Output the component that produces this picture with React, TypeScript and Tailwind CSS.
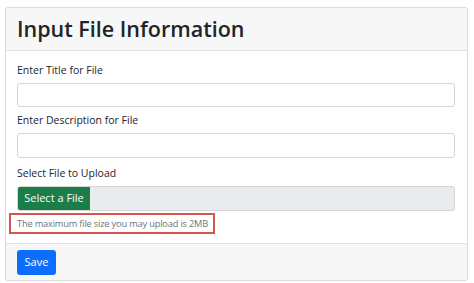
export default function App() {
  return (
    <div className="w-[474px] h-[283px] bg-white pt-[7px] pl-[5px]" style={{ fontFamily: '"Segoe UI", "Open Sans", sans-serif' }}>
      <div className="w-[463px] border border-[#dcdcdc] rounded-[3px] overflow-hidden">
        <div className="h-[43px] bg-[#f7f7f7] border-b border-[#e2e2e2] flex items-center px-[11px]">
          <h1 className="text-[21.5px] leading-none text-[#212529] font-semibold">Input File Information</h1>
        </div>
        <div className="px-[11px] pt-[12px] pb-[9px] flex flex-col">
          <label className="text-[10.5px] text-[#212529] leading-[14px]">Enter Title for File</label>
          <input className="mt-[6px] h-[24px] w-[438px] border border-[#d6d6d6] rounded-[3px]" />
          <label className="mt-[6px] text-[10.5px] text-[#212529] leading-[14px]">Enter Description for File</label>
          <input className="mt-[6px] h-[25px] w-[438px] border border-[#d6d6d6] rounded-[3px]" />
          <label className="mt-[8px] text-[10.5px] text-[#212529] leading-[14px]">Select File to Upload</label>
          <div className="mt-[6px] h-[25px] w-[438px] flex bg-[#e9ecef] border border-[#d6d6d6] rounded-[3px] overflow-hidden">
            <button className="w-[72px] h-full bg-[#1a7d4a] text-white text-[11px] font-medium">Select a File</button>
          </div>
          <div className="mt-[2px] -ml-[8px] w-[206px] h-[21px] border-2 border-[#d9534f] flex items-center pl-[6px]">
            <span className="text-[9.3px] whitespace-nowrap text-[#6c757d] tracking-[-0.2px]">The maximum file size you may upload is 2MB</span>
          </div>
        </div>
        <div className="h-[37px] bg-[#f7f7f7] border-t border-[#e2e2e2] flex items-center px-[11px]">
          <button className="w-[39px] h-[25px] bg-[#0d6efd] text-white text-[11px] rounded-[3px]">Save</button>
        </div>
      </div>
    </div>
  );
}
